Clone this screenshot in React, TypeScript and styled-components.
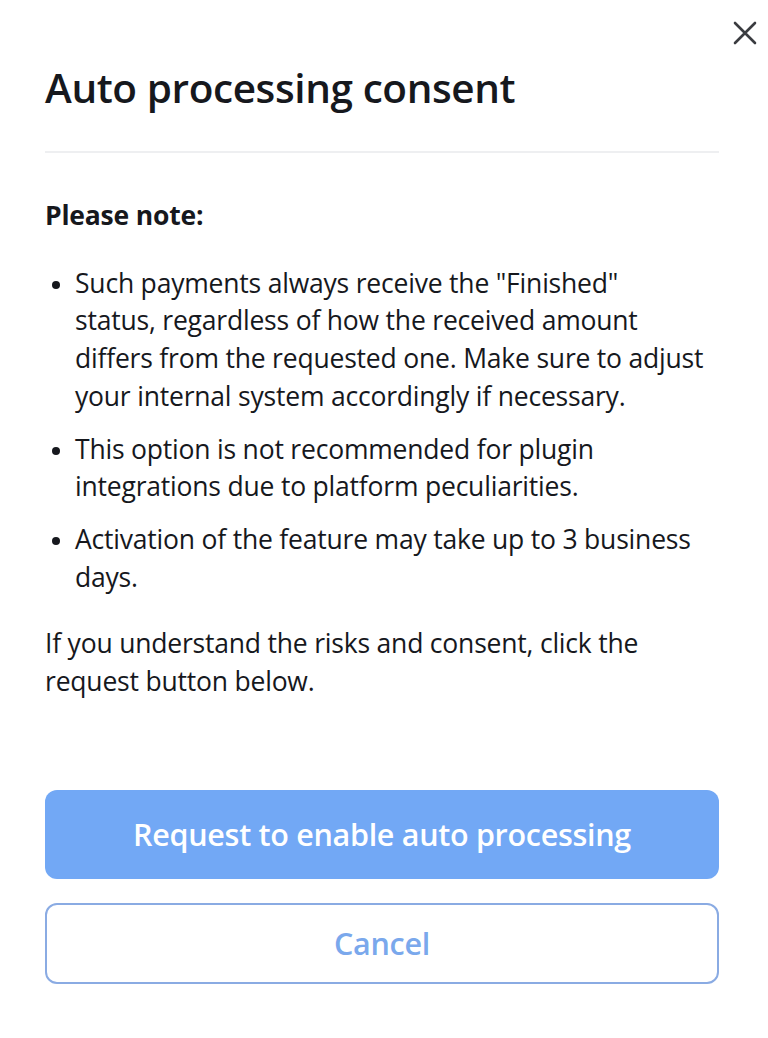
import React from 'react'
import styled, { createGlobalStyle } from 'styled-components'

const GlobalStyle = createGlobalStyle`
  html, body {
    margin: 0;
    padding: 0;
    background: #fff;
  }
  body {
    font-family: "Open Sans", Lato, "Liberation Sans", sans-serif;
    color: #16181d;
  }
`

const Modal = styled.div`
  position: relative;
  width: 768px;
  height: 1038px;
  box-sizing: border-box;
  padding: 58px 49px 0 45px;
  display: flex;
  flex-direction: column;
`

const CloseButton = styled.button`
  position: absolute;
  top: 20px;
  right: 10px;
  width: 26px;
  height: 26px;
  padding: 0;
  border: 0;
  background: transparent;
  display: flex;
  align-items: center;
  justify-content: center;
  cursor: pointer;
`

const Title = styled.h1`
  margin: 0;
  font-size: 40.5px;
  line-height: 60px;
  font-weight: 600;
  letter-spacing: -0.4px;
  color: #16181d;
`

const Divider = styled.hr`
  margin: 33px 0 0;
  border: 0;
  border-top: 2px solid #eeeff1;
`

const Body = styled.div`
  font-size: 26.5px;
  line-height: 37.7px;
  letter-spacing: -0.2px;
  max-width: 667px;
`

const Note = styled.p`
  margin: 44px 0 0;
  font-weight: 700;
`

const List = styled.ul`
  margin: 30px 0 0;
  padding: 0 0 0 30px;
  display: flex;
  flex-direction: column;
  gap: 15px;
`

const Item = styled.li`
  &::marker {
    font-size: 22px;
  }
`

const Paragraph = styled.p`
  margin: 29px 0 0;
`

const Actions = styled.div`
  margin-top: 89px;
  display: flex;
  flex-direction: column;
  gap: 24px;
`

const Button = styled.button<{ $variant: 'primary' | 'outline' }>`
  width: 100%;
  box-sizing: border-box;
  font-family: inherit;
  font-size: 30.5px;
  font-weight: 600;
  letter-spacing: -0.3px;
  border-radius: 12px;
  cursor: pointer;
  height: ${(p) => (p.$variant === 'primary' ? '89px' : '81px')};
  background: ${(p) => (p.$variant === 'primary' ? '#72a8f5' : '#ffffff')};
  color: ${(p) => (p.$variant === 'primary' ? '#ffffff' : '#7aa8ec')};
  border: ${(p) => (p.$variant === 'primary' ? '0' : '2px solid #8aabe3')};
`

// nbsp keeps "status," with the next word so the line breaks as in the design
const firstNote =
  'Such payments always receive the "Finished" status,\u00a0regardless of how the received amount differs from the requested one. Make sure to adjust your internal system accordingly if necessary.'

export default function App() {
  return (
    <>
      <GlobalStyle />
      <Modal>
        <CloseButton aria-label="Close">
          <svg width="24" height="24" viewBox="0 0 24 24" fill="none">
            <path
              d="M2 2 L22 22 M22 2 L2 22"
              stroke="#3a3c40"
              strokeWidth="2.6"
              strokeLinecap="round"
            />
          </svg>
        </CloseButton>
        <Title>Auto processing consent</Title>
        <Divider />
        <Body>
          <Note>Please note:</Note>
          <List>
            <Item>{firstNote}</Item>
            <Item>
              This option is not recommended for plugin integrations due to
              platform peculiarities.
            </Item>
            <Item>
              Activation of the feature may take up to 3 business days.
            </Item>
          </List>
          <Paragraph>
            If you understand the risks and consent, click the request button
            below.
          </Paragraph>
        </Body>
        <Actions>
          <Button $variant="primary">Request to enable auto processing</Button>
          <Button $variant="outline">Cancel</Button>
        </Actions>
      </Modal>
    </>
  )
}
